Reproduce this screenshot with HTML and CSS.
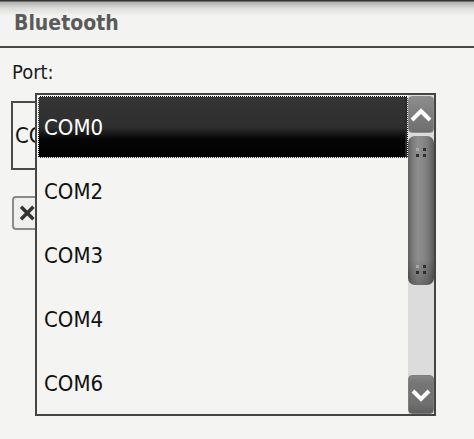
FILE: index.html
```html
<!DOCTYPE html>
<html>
<head>
<meta charset="utf-8">
<link rel="stylesheet" href="styles.css">
</head>
<body>
<div class="screen">
  <header class="header"><span class="title">Bluetooth</span></header>
  <div class="content">
    <div class="label">Port:</div>
    <div class="combo">COM0</div>
    <div class="xbtn">
      <svg width="34" height="34" viewBox="0 0 34 34"><path d="M8 10 L22 24 M22 10 L8 24" stroke="#333" stroke-width="4" fill="none"/></svg>
    </div>
  </div>
  <div class="dropdown">
    <ul class="list">
      <li class="item selected">COM0</li>
      <li class="item">COM2</li>
      <li class="item">COM3</li>
      <li class="item">COM4</li>
      <li class="item">COM6</li>
    </ul>
    <div class="scrollbar">
      <div class="sbtn up">
        <svg width="22" height="14" viewBox="0 0 22 14"><polyline points="2,12 11,3 20,12" fill="none" stroke="#fff" stroke-width="4"/></svg>
      </div>
      <div class="thumb">
        <span class="grip"><i class="d l"></i><i class="d"></i><i class="d"></i><i class="d"></i></span>
        <span class="grip"><i class="d l"></i><i class="d"></i><i class="d"></i><i class="d"></i></span>
      </div>
      <div class="track"></div>
      <div class="sbtn down">
        <svg width="20" height="14" viewBox="0 0 20 14"><polyline points="2,3 10,11 18,3" fill="none" stroke="#fff" stroke-width="4"/></svg>
      </div>
    </div>
  </div>
</div>
</body>
</html>
```

FILE: styles.css
```css
html, body {
  margin: 0;
  padding: 0;
  background: #f4f4f2;
}
.screen {
  position: relative;
  width: 474px;
  height: 439px;
  overflow: hidden;
  font-family: "DejaVu Sans Condensed", "DejaVu Sans", sans-serif;
  color: #111;
}
.header {
  height: 46px;
  border-bottom: 2px solid #4a4a4a;
  background: linear-gradient(#333 0, #333 1px, #b0b0b0 2px, #dcdcda 8px, #f3f3f1 16px);
  display: flex;
  align-items: center;
  padding-left: 14px;
}
.title {
  font-weight: bold;
  font-size: 21px;
  color: #5a5a5a;
}
.content {
  padding: 0 11px;
}
.label {
  margin-top: 12px;
  margin-left: 1px;
  font-size: 20px;
  line-height: 24px;
  color: #1a1a1a;
}
.combo {
  margin-top: 17px;
  width: 390px;
  height: 69px;
  box-sizing: border-box;
  border: 2px solid #4a4a4a;
  display: flex;
  align-items: center;
  padding-left: 2px;
  font-size: 22px;
}
.xbtn {
  margin-top: 26px;
  margin-left: 1px;
  width: 34px;
  height: 34px;
  box-sizing: border-box;
  border: 2px solid #8a8a8a;
  border-radius: 4px;
  background: #efefed;
  display: flex;
  align-items: center;
  justify-content: center;
}
.xbtn svg { display: block; }
.dropdown {
  position: absolute;
  left: 35px;
  top: 93px;
  width: 401px;
  height: 323px;
  box-sizing: border-box;
  border: 2px solid #454545;
  background: #f4f4f2;
  display: flex;
}
.list {
  list-style: none;
  margin: 0;
  padding: 0;
  flex: 1;
  overflow: hidden;
}
.item {
  height: 64px;
  box-sizing: border-box;
  display: flex;
  align-items: center;
  padding-left: 7px;
  font-size: 22px;
  color: #111;
}
.item.selected {
  height: 62px;
  margin: 1px 0 1px 1px;
  padding-left: 5px;
  border: 1px dotted #fff;
  color: #fff;
  background: linear-gradient(#343434 0%, #2f2f2f 50%, #1a1a1a 60%, #050505 70%, #000 100%);
  box-shadow: inset -2px 0 0 #2a2a2a;
}
.scrollbar {
  width: 26px;
  background: #dcdcdc;
  display: flex;
  flex-direction: column;
  padding-top: 1px;
}
.sbtn {
  box-sizing: border-box;
  border-radius: 4px;
  display: flex;
  align-items: center;
  justify-content: center;
  border: 1px solid #8e8e8e;
}
.sbtn svg { display: block; }
.sbtn.up {
  height: 37px;
  background: linear-gradient(#8c8c8c, #7a7a7a 60%, #6e6e6e);
}
.sbtn.down {
  height: 39px;
  background: linear-gradient(#858585, #767676 20%, #707070 75%, #5e5e5e);
  border-color: #7e7e7e;
}
.thumb {
  margin-top: 3px;
  height: 149px;
  border-radius: 7px;
  background:
    linear-gradient(to bottom, rgba(0,0,0,0) 82%, rgba(0,0,0,0.22) 100%),
    linear-gradient(to right, #5e5e5e 0%, #7c7c7c 18%, #8e8e8e 38%, #888 55%, #7c7c7c 75%, #5a5a5a 100%);
  display: flex;
  flex-direction: column;
  justify-content: space-between;
  align-items: center;
  padding: 12px 0 11px;
  box-sizing: border-box;
}
.grip {
  display: grid;
  grid-template-columns: 3px 3px;
  gap: 3px 4px;
}
.d {
  display: block;
  width: 3px;
  height: 3px;
  background: #2e2e2e;
}
.d.l { background: #a8a8a8; }
.track {
  flex: 1;
}
```
